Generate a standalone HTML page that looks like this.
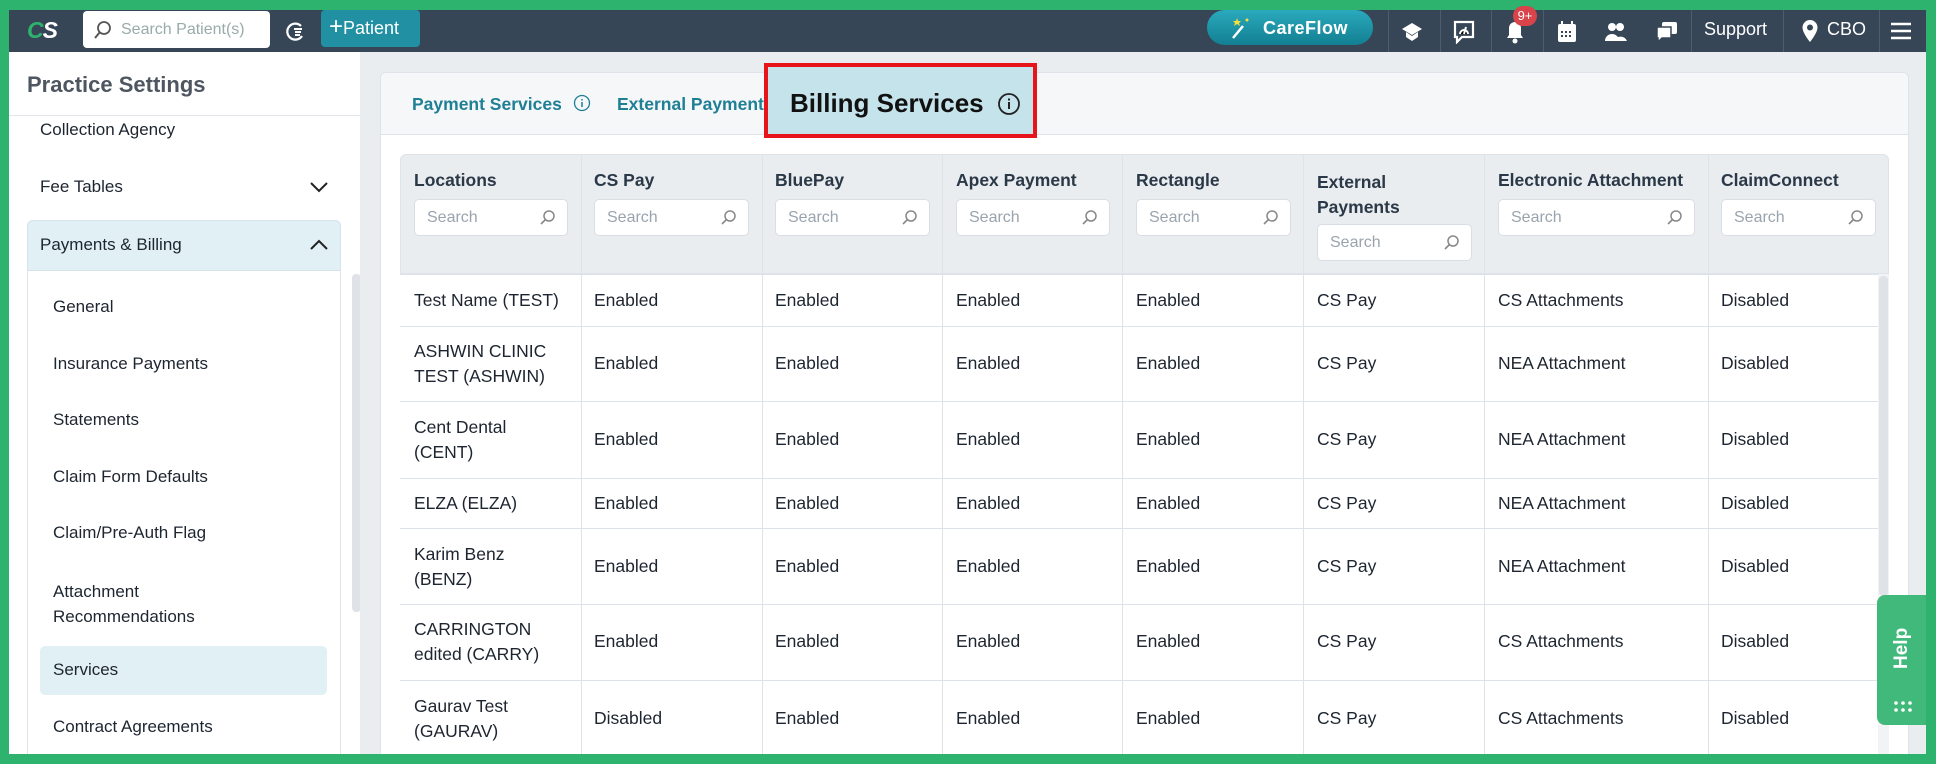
<!DOCTYPE html>
<html><head><meta charset="utf-8"><style>
*{box-sizing:border-box;margin:0;padding:0}
html{width:1936px;height:764px;overflow:hidden}
body{width:1936px;height:764px;overflow:hidden;background:#2db36d;font-family:"Liberation Sans",Arial,sans-serif;position:relative;color:#1d2530}
.abs{position:absolute}
#nav{left:9px;top:10px;width:1917px;height:42px;background:#364656}
#side{left:9px;top:52px;width:351px;height:702px;background:#fff;overflow:hidden}
#main{left:360px;top:52px;width:1566px;height:702px;background:#e9edf0;overflow:hidden}
.si{position:absolute;font-size:17px;color:#1d2530}
.sep{position:absolute;top:0;width:1px;height:42px;background:#4d5d6c}
.th{position:absolute;font-size:17.5px;font-weight:bold;color:#2b3847}
.srch{position:absolute;height:37px;background:#fff;border:1px solid #d8dee4;border-radius:5px;font-size:16px;color:#9aa4ae;padding:9px 0 0 12px}
.srch svg{position:absolute;right:10px;top:9px}
.td{position:absolute;font-size:17.5px;color:#1d2530;line-height:25px}
.vl{position:absolute;width:1px;background:#dde3e9}
.hl{position:absolute;height:1px;background:#dde3e9;left:400px;width:1478px}
</style></head><body>
<div id="nav" class="abs">
 <div class="abs" style="left:18px;top:7px;font-size:23px;font-weight:bold;font-style:italic;letter-spacing:-1px"><span style="color:#2db36d">C</span><span style="color:#fff">S</span></div>
 <div class="abs" style="left:74px;top:1px;width:187px;height:37px;background:#fff;border-radius:4px;font-size:16px;color:#9aa;padding:10px 0 0 38px">Search Patient(s)
  <svg class="abs" style="left:10px;top:9px" width="20" height="20" viewBox="0 0 20 20"><circle cx="11" cy="8" r="6" fill="none" stroke="#555" stroke-width="1.8"/><path d="M7 12L2 18" stroke="#555" stroke-width="2"/></svg></div>
 <svg class="abs" style="left:276px;top:11px" width="22" height="22" viewBox="0 0 22 22"><path d="M16 5A8 8 0 1 0 17 15" fill="none" stroke="#fff" stroke-width="2.2"/><path d="M9 8h8M10 11h6M10 14h5" stroke="#fff" stroke-width="2"/></svg>
 <div class="abs" style="left:312px;top:0;width:99px;height:37px;background:#2190a3;border-radius:4px;color:#fff;font-size:18px;padding:8px 0 0 8px"><b style="font-size:24px;font-weight:normal;line-height:18px">+</b>Patient</div>
 <div class="abs" style="left:1198px;top:0;width:166px;height:35px;border-radius:18px;background:linear-gradient(#2aa9bd,#137f92);color:#fff;font-size:18px;font-weight:bold;padding:8px 0 0 56px;letter-spacing:.5px">CareFlow
  <svg class="abs" style="left:22px;top:6px" width="24" height="24" viewBox="0 0 24 24"><path d="M4 22L14 10" stroke="#fff" stroke-width="2.5"/><path d="M8 2l1 3 3 0-2 2 1 3-3-2-3 2 1-3-2-2 3 0z" fill="#f5e13a"/><circle cx="18" cy="4" r="1.5" fill="#f5e13a"/></svg></div>
 <div class="sep" style="left:1379px"></div><div class="sep" style="left:1431px"></div><div class="sep" style="left:1482px"></div><div class="sep" style="left:1534px"></div><div class="sep" style="left:1682px"></div><div class="sep" style="left:1774px"></div><div class="sep" style="left:1870px"></div>
 <svg class="abs" style="left:1392px;top:11px" width="22" height="22" viewBox="0 0 22 22"><path d="M11 2L21 8 11 14 1 8z" fill="#fff"/><path d="M5 11v5l6 4 6-4v-5l-6 4z" fill="#fff"/></svg>
 <svg class="abs" style="left:1444px;top:10px" width="22" height="24" viewBox="0 0 22 24"><path d="M2 2h18v15H9l-5 5v-5H2z" fill="none" stroke="#fff" stroke-width="2.2"/><path d="M7 14a4 4 0 0 1 8 0M11 14l2-7" stroke="#fff" stroke-width="2"/></svg>
 <svg class="abs" style="left:1496px;top:10px" width="20" height="24" viewBox="0 0 20 24"><path d="M10 2a6 6 0 0 1 6 6v7l2 3H2l2-3V8a6 6 0 0 1 6-6z" fill="#fff"/><circle cx="10" cy="21" r="2.5" fill="#fff"/></svg>
 <div class="abs" style="left:1504px;top:-4px;width:24px;height:20px;border-radius:10px;background:#d9434a;color:#fff;font-size:13px;text-align:center;line-height:20px">9+</div>
 <svg class="abs" style="left:1547px;top:10px" width="22" height="24" viewBox="0 0 22 24"><rect x="2" y="4" width="18" height="18" rx="2" fill="#fff"/><rect x="5" y="1" width="2" height="5" fill="#fff"/><rect x="15" y="1" width="2" height="5" fill="#fff"/><g fill="#364656"><rect x="5" y="11" width="2" height="2"/><rect x="9" y="11" width="2" height="2"/><rect x="13" y="11" width="2" height="2"/><rect x="5" y="15" width="2" height="2"/><rect x="9" y="15" width="2" height="2"/><rect x="13" y="15" width="2" height="2"/></g></svg>
 <svg class="abs" style="left:1595px;top:11px" width="24" height="22" viewBox="0 0 24 22"><circle cx="8" cy="6" r="4" fill="#fff"/><circle cx="16" cy="6" r="4" fill="#fff"/><path d="M1 20a7 7 0 0 1 14 0zM10 20a7 7 0 0 1 13 0z" fill="#fff"/></svg>
 <svg class="abs" style="left:1646px;top:11px" width="24" height="22" viewBox="0 0 24 22"><rect x="7" y="1" width="15" height="12" rx="2" fill="#fff"/><path d="M2 6h14v11H7l-4 4v-4H2z" fill="#fff" stroke="#364656" stroke-width="1.5"/></svg>
 <div class="abs" style="left:1695px;top:9px;color:#fff;font-size:18px">Support</div>
 <svg class="abs" style="left:1792px;top:9px" width="18" height="24" viewBox="0 0 18 24"><path d="M9 1a7.5 7.5 0 0 1 7.5 7.5C16.5 14 9 23 9 23S1.5 14 1.5 8.5A7.5 7.5 0 0 1 9 1z" fill="#fff"/><circle cx="9" cy="8.5" r="3" fill="#364656"/></svg>
 <div class="abs" style="left:1818px;top:9px;color:#fff;font-size:18px">CBO</div>
 <svg class="abs" style="left:1882px;top:12px" width="20" height="18" viewBox="0 0 20 18"><path d="M0 2h20M0 9h20M0 16h20" stroke="#fff" stroke-width="2.6"/></svg>
</div>

<div id="side" class="abs">
 <div class="abs" style="left:18px;top:20px;font-size:22px;font-weight:bold;color:#4e5661">Practice Settings</div>
 <div class="abs" style="left:0;top:63px;width:351px;height:1px;background:#e2e6ea"></div>
 <div class="abs" style="left:343px;top:222px;width:9px;height:338px;background:#dfe3e7;border-radius:4px"></div>
 <div class="si" style="left:31px;top:68px">Collection Agency</div>
 <div class="si" style="left:31px;top:125px">Fee Tables</div>
 <svg class="abs" style="left:300px;top:128px" width="20" height="14" viewBox="0 0 20 14"><path d="M2 3l8 8 8-8" fill="none" stroke="#222" stroke-width="2"/></svg>
 <div class="abs" style="left:18px;top:168px;width:314px;height:534px;border:1px solid #dfe4e8;border-bottom:none;border-radius:6px 6px 0 0"></div>
 <div class="abs" style="left:18px;top:168px;width:314px;height:51px;background:#e1f0f5;border-radius:6px 6px 0 0;border:1px solid #d6e3ea"></div>
 <div class="si" style="left:31px;top:183px">Payments &amp; Billing</div>
 <svg class="abs" style="left:300px;top:186px" width="20" height="14" viewBox="0 0 20 14"><path d="M2 11l8-8 8 8" fill="none" stroke="#222" stroke-width="2"/></svg>
 <div class="si" style="left:44px;top:245px">General</div>
 <div class="si" style="left:44px;top:302px">Insurance Payments</div>
 <div class="si" style="left:44px;top:358px">Statements</div>
 <div class="si" style="left:44px;top:415px">Claim Form Defaults</div>
 <div class="si" style="left:44px;top:471px">Claim/Pre-Auth Flag</div>
 <div class="si" style="left:44px;top:527px;line-height:25px">Attachment<br>Recommendations</div>
 <div class="abs" style="left:31px;top:594px;width:287px;height:49px;background:#e1f0f5;border-radius:5px"></div>
 <div class="si" style="left:44px;top:608px">Services</div>
 <div class="si" style="left:44px;top:665px">Contract Agreements</div>
</div>

<div id="main" class="abs">
 <div class="abs" style="left:20px;top:20px;width:1529px;height:682px;background:#fff;border:1px solid #dde3e8;border-bottom:none;border-radius:6px 6px 0 0"></div>
 <div class="abs" style="left:21px;top:21px;width:1527px;height:62px;background:#f5f7f9;border-bottom:1px solid #dde3e8;border-radius:6px 6px 0 0"></div>
 <div class="abs" style="left:52px;top:42px;font-size:17.5px;font-weight:bold;color:#1f7f95">Payment Services</div>
 <svg class="abs" style="left:213px;top:42px" width="18" height="18" viewBox="0 0 18 18"><circle cx="9" cy="9" r="7.5" fill="none" stroke="#1f7f95" stroke-width="1.3"/><path d="M9 8v5M9 5v1.5" stroke="#1f7f95" stroke-width="1.5"/></svg>
 <div class="abs" style="left:257px;top:42px;font-size:17.5px;font-weight:bold;color:#1f7f95">External Payment</div>
 <div class="abs" style="left:404px;top:11px;width:273px;height:75px;background:#c5e3ea;border:4px solid #e8141b"></div>
 <div class="abs" style="left:430px;top:36px;font-size:26px;font-weight:bold;color:#111">Billing Services</div>
 <svg class="abs" style="left:637px;top:40px" width="24" height="24" viewBox="0 0 24 24"><circle cx="12" cy="12" r="10" fill="none" stroke="#222" stroke-width="1.8"/><path d="M12 10v7M12 6.5v2" stroke="#222" stroke-width="2"/></svg>
</div>

<!-- table -->
<div class="abs" style="left:400px;top:154px;width:1489px;height:120px;background:#e9edf0;border:1px solid #dde3e8;border-radius:6px 6px 0 0"></div>
<div class="abs" style="left:1878px;top:274px;width:11px;height:480px;background:#f1f3f5"></div>
<div class="abs" style="left:1879px;top:276px;width:9px;height:320px;background:#dfe3e7;border-radius:4px"></div>
<div class="vl" style="left:581px;top:154px;height:600px"></div>
<div class="vl" style="left:762px;top:154px;height:600px"></div>
<div class="vl" style="left:942px;top:154px;height:600px"></div>
<div class="vl" style="left:1122px;top:154px;height:600px"></div>
<div class="vl" style="left:1303px;top:154px;height:600px"></div>
<div class="vl" style="left:1484px;top:154px;height:600px"></div>
<div class="vl" style="left:1708px;top:154px;height:600px"></div>
<div class="hl" style="top:274px"></div><div class="hl" style="top:326px"></div><div class="hl" style="top:401px"></div><div class="hl" style="top:478px"></div><div class="hl" style="top:528px"></div><div class="hl" style="top:604px"></div><div class="hl" style="top:680px"></div>

<div class="th" style="left:414px;top:170px">Locations</div>
<div class="th" style="left:594px;top:170px">CS Pay</div>
<div class="th" style="left:775px;top:170px">BluePay</div>
<div class="th" style="left:956px;top:170px">Apex Payment</div>
<div class="th" style="left:1136px;top:170px">Rectangle</div>
<div class="th" style="left:1317px;top:170px;line-height:25px">External<br>Payments</div>
<div class="th" style="left:1498px;top:170px">Electronic Attachment</div>
<div class="th" style="left:1721px;top:170px">ClaimConnect</div>

<div class="srch" style="left:414px;top:199px;width:154px">Search<svg width="18" height="18" viewBox="0 0 18 18"><circle cx="10" cy="7" r="5" fill="none" stroke="#888" stroke-width="1.5"/><path d="M6.5 10.5L2 15" stroke="#888" stroke-width="1.6"/></svg></div>
<div class="srch" style="left:594px;top:199px;width:155px">Search<svg width="18" height="18" viewBox="0 0 18 18"><circle cx="10" cy="7" r="5" fill="none" stroke="#888" stroke-width="1.5"/><path d="M6.5 10.5L2 15" stroke="#888" stroke-width="1.6"/></svg></div>
<div class="srch" style="left:775px;top:199px;width:155px">Search<svg width="18" height="18" viewBox="0 0 18 18"><circle cx="10" cy="7" r="5" fill="none" stroke="#888" stroke-width="1.5"/><path d="M6.5 10.5L2 15" stroke="#888" stroke-width="1.6"/></svg></div>
<div class="srch" style="left:956px;top:199px;width:154px">Search<svg width="18" height="18" viewBox="0 0 18 18"><circle cx="10" cy="7" r="5" fill="none" stroke="#888" stroke-width="1.5"/><path d="M6.5 10.5L2 15" stroke="#888" stroke-width="1.6"/></svg></div>
<div class="srch" style="left:1136px;top:199px;width:155px">Search<svg width="18" height="18" viewBox="0 0 18 18"><circle cx="10" cy="7" r="5" fill="none" stroke="#888" stroke-width="1.5"/><path d="M6.5 10.5L2 15" stroke="#888" stroke-width="1.6"/></svg></div>
<div class="srch" style="left:1317px;top:224px;width:155px">Search<svg width="18" height="18" viewBox="0 0 18 18"><circle cx="10" cy="7" r="5" fill="none" stroke="#888" stroke-width="1.5"/><path d="M6.5 10.5L2 15" stroke="#888" stroke-width="1.6"/></svg></div>
<div class="srch" style="left:1498px;top:199px;width:197px">Search<svg width="18" height="18" viewBox="0 0 18 18"><circle cx="10" cy="7" r="5" fill="none" stroke="#888" stroke-width="1.5"/><path d="M6.5 10.5L2 15" stroke="#888" stroke-width="1.6"/></svg></div>
<div class="srch" style="left:1721px;top:199px;width:155px">Search<svg width="18" height="18" viewBox="0 0 18 18"><circle cx="10" cy="7" r="5" fill="none" stroke="#888" stroke-width="1.5"/><path d="M6.5 10.5L2 15" stroke="#888" stroke-width="1.6"/></svg></div>

<!-- rows -->
<div class="td" style="left:414px;top:288px">Test Name (TEST)</div><div class="td" style="left:594px;top:288px">Enabled</div><div class="td" style="left:775px;top:288px">Enabled</div><div class="td" style="left:956px;top:288px">Enabled</div><div class="td" style="left:1136px;top:288px">Enabled</div><div class="td" style="left:1317px;top:288px">CS Pay</div><div class="td" style="left:1498px;top:288px">CS Attachments</div><div class="td" style="left:1721px;top:288px">Disabled</div>
<div class="td" style="left:414px;top:339px">ASHWIN CLINIC<br>TEST (ASHWIN)</div><div class="td" style="left:594px;top:351px">Enabled</div><div class="td" style="left:775px;top:351px">Enabled</div><div class="td" style="left:956px;top:351px">Enabled</div><div class="td" style="left:1136px;top:351px">Enabled</div><div class="td" style="left:1317px;top:351px">CS Pay</div><div class="td" style="left:1498px;top:351px">NEA Attachment</div><div class="td" style="left:1721px;top:351px">Disabled</div>
<div class="td" style="left:414px;top:415px">Cent Dental<br>(CENT)</div><div class="td" style="left:594px;top:427px">Enabled</div><div class="td" style="left:775px;top:427px">Enabled</div><div class="td" style="left:956px;top:427px">Enabled</div><div class="td" style="left:1136px;top:427px">Enabled</div><div class="td" style="left:1317px;top:427px">CS Pay</div><div class="td" style="left:1498px;top:427px">NEA Attachment</div><div class="td" style="left:1721px;top:427px">Disabled</div>
<div class="td" style="left:414px;top:491px">ELZA (ELZA)</div><div class="td" style="left:594px;top:491px">Enabled</div><div class="td" style="left:775px;top:491px">Enabled</div><div class="td" style="left:956px;top:491px">Enabled</div><div class="td" style="left:1136px;top:491px">Enabled</div><div class="td" style="left:1317px;top:491px">CS Pay</div><div class="td" style="left:1498px;top:491px">NEA Attachment</div><div class="td" style="left:1721px;top:491px">Disabled</div>
<div class="td" style="left:414px;top:542px">Karim Benz<br>(BENZ)</div><div class="td" style="left:594px;top:554px">Enabled</div><div class="td" style="left:775px;top:554px">Enabled</div><div class="td" style="left:956px;top:554px">Enabled</div><div class="td" style="left:1136px;top:554px">Enabled</div><div class="td" style="left:1317px;top:554px">CS Pay</div><div class="td" style="left:1498px;top:554px">NEA Attachment</div><div class="td" style="left:1721px;top:554px">Disabled</div>
<div class="td" style="left:414px;top:617px">CARRINGTON<br>edited (CARRY)</div><div class="td" style="left:594px;top:629px">Enabled</div><div class="td" style="left:775px;top:629px">Enabled</div><div class="td" style="left:956px;top:629px">Enabled</div><div class="td" style="left:1136px;top:629px">Enabled</div><div class="td" style="left:1317px;top:629px">CS Pay</div><div class="td" style="left:1498px;top:629px">CS Attachments</div><div class="td" style="left:1721px;top:629px">Disabled</div>
<div class="td" style="left:414px;top:694px">Gaurav Test<br>(GAURAV)</div><div class="td" style="left:594px;top:706px">Disabled</div><div class="td" style="left:775px;top:706px">Enabled</div><div class="td" style="left:956px;top:706px">Enabled</div><div class="td" style="left:1136px;top:706px">Enabled</div><div class="td" style="left:1317px;top:706px">CS Pay</div><div class="td" style="left:1498px;top:706px">CS Attachments</div><div class="td" style="left:1721px;top:706px">Disabled</div>

<div class="abs" style="left:0;top:754px;width:1936px;height:10px;background:#2db36d"></div>

<!-- help -->
<div class="abs" style="left:1877px;top:595px;width:49px;height:130px;background:#41b97a;border-radius:8px 0 0 8px"></div>
<div class="abs" style="left:1882px;top:638px;color:#fff;font-weight:bold;font-size:19px;transform:rotate(-90deg);transform-origin:center;width:40px;text-align:center">Help</div>
<svg class="abs" style="left:1893px;top:700px" width="20" height="14" viewBox="0 0 20 14"><g fill="#fff"><circle cx="3" cy="3" r="1.8"/><circle cx="10" cy="3" r="1.8"/><circle cx="17" cy="3" r="1.8"/><circle cx="3" cy="10" r="1.8"/><circle cx="10" cy="10" r="1.8"/><circle cx="17" cy="10" r="1.8"/></g></svg>
</body></html>
